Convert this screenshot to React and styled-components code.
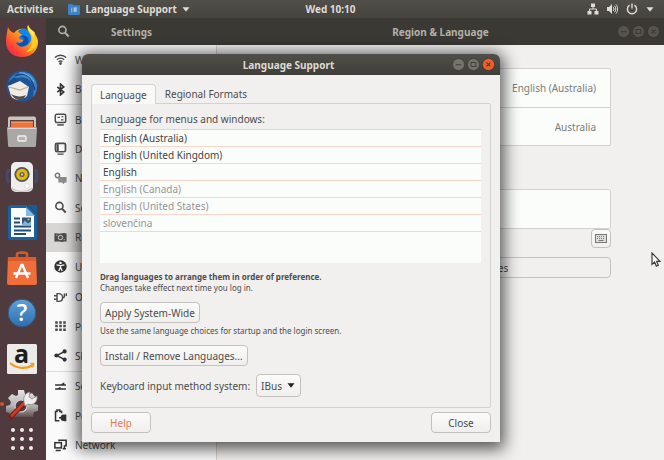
import React, { useState } from "react";
import styled, { createGlobalStyle } from "styled-components";

const GlobalStyle = createGlobalStyle`
  * {
    box-sizing: border-box;
  }
  body {
    margin: 0;
    font-family: "Noto Sans", "Open Sans", sans-serif;
    font-size: 10px;
    line-height: 16px;
    color: #4c4c4c;
  }
  button,
  select {
    font: inherit;
    color: inherit;
  }
`;

const Desktop = styled.div`
  position: relative;
  display: flex;
  flex-direction: column;
  min-height: 100vh;
  overflow: hidden;
  background: #f1f0ef;
`;

const TopBar = styled.header`
  display: grid;
  grid-template-columns: 1fr auto 1fr;
  align-items: center;
  height: 18px;
  padding: 0 10px 0 7px;
  background: linear-gradient(#514f49, #45433e);
  color: #dfdcd6;
  font-weight: 700;
`;

const BarGroup = styled.div`
  display: flex;
  align-items: center;
  justify-content: ${(props) => (props.$end ? "flex-end" : "flex-start")};
  gap: ${(props) => (props.$end ? "8px" : "15px")};
`;

const BarButton = styled.button`
  display: flex;
  align-items: center;
  gap: 5px;
  padding: 0;
  border: none;
  background: none;
`;

const Workspace = styled.div`
  display: flex;
  flex: 1;
`;

const Dock = styled.nav`
  display: flex;
  flex-direction: column;
  width: 46px;
  padding-right: 2px;
  background: #4f3a3e;
`;

const DockItem = styled.button`
  position: relative;
  display: flex;
  flex: 1;
  align-items: center;
  justify-content: center;
  padding: 0;
  border: none;
  background: none;

  svg {
    display: block;
    overflow: visible;
  }
`;

const AppsItem = styled(DockItem)`
  flex: 0 0 33px;
  align-items: flex-start;
  padding-top: 1px;
`;

const RunningDot = styled.span`
  position: absolute;
  left: 0;
  width: 4px;
  height: 4px;
  border-radius: 2px;
  background: #d9532c;
`;

const SettingsWindow = styled.main`
  display: grid;
  grid-template-columns: 171px 1fr;
  grid-template-rows: 27px 1fr;
  flex: 1;
`;

const WindowHeader = styled.div`
  display: grid;
  grid-template-columns: 48px 1fr 48px;
  align-items: center;
  background: #3b3934;
  color: #b5b1a8;
  font-weight: 700;
  text-align: center;
`;

const HeaderIcon = styled.button`
  display: flex;
  padding: 0 0 0 11px;
  border: none;
  background: none;
`;

const Title = styled.h1`
  grid-column: 2;
  margin: 0;
  font-size: 10px;
`;

const Sidebar = styled.ul`
  display: flex;
  flex-direction: column;
  margin: 0;
  padding: 0;
  list-style: none;
  background: #fafafa;
  border-right: 1px solid #d5d3d0;
`;

const SidebarRow = styled.li`
  display: flex;
  flex: 1;
  background: ${(props) => (props.$active ? "#d8d6d4" : "transparent")};
  border-bottom: ${(props) => (props.$last ? "1px solid #dcdad8" : "none")};
`;

const SidebarLink = styled.a`
  display: flex;
  flex: 1;
  align-items: center;
  gap: 8px;
  padding-left: 8px;
  color: #4c4c4c;
  text-decoration: none;
`;

const Panel = styled.section`
  display: flex;
  flex-direction: column;
  padding: 23px 53px;
`;

const Card = styled.div`
  background: #fbfdfb;
  border: 1px solid #d3d2d0;
  border-radius: 2px;
`;

const CardRow = styled.div`
  display: flex;
  align-items: center;
  justify-content: space-between;
  height: 38px;
  padding: 0 14px;
  color: #7b7b7b;

  & + & {
    border-top: 1px solid #d3d2d0;
  }
`;

const SourcesLabel = styled.h2`
  margin: 20px 0 7px;
  font-size: 10px;
`;

const Button = styled.button`
  height: 21px;
  padding: 0 4px;
  border: 1px solid #c4c2bf;
  border-radius: 4px;
  background: linear-gradient(#fbfbfa, #f0efee);
  color: ${(props) => (props.$accent ? "#f0764d" : "#4c4c4c")};
  line-height: 18px;
`;

const KeyboardButton = styled(Button)`
  display: flex;
  align-items: center;
  justify-content: center;
  align-self: flex-end;
  width: 20px;
  height: 19px;
  padding: 0;
  margin-bottom: 9px;
`;

const FlatButton = styled(Button)`
  background: #f1f0ef;
`;

const Dialog = styled.div`
  position: absolute;
  top: 54px;
  left: 82px;
  width: 418px;
  border-radius: 6px 6px 0 0;
  background: #f1f0ef;
  box-shadow: 0 3px 16px 4px rgba(0, 0, 0, 0.65);
`;

const DialogHeader = styled(WindowHeader)`
  height: 21px;
  padding-right: 5px;
  border-radius: 6px 6px 0 0;
  background: linear-gradient(#504e48, #403e39);
  color: #dedad2;
`;

const WindowControls = styled.div`
  display: flex;
  justify-content: flex-end;
  gap: 2px;
`;

const HeaderControls = styled(WindowControls)`
  padding-right: 4px;
`;

const ControlButton = styled.button`
  display: flex;
  padding: 0;
  border: none;
  background: none;
`;

const DialogBody = styled.div`
  padding: 9px;
`;

const Tabs = styled.div`
  display: flex;
  height: 19px;
`;

const Tab = styled.button`
  height: ${(props) => (props.$active ? "20px" : "19px")};
  padding: 0 8px;
  border: 1px solid ${(props) => (props.$active ? "#d3d2d0" : "transparent")};
  border-bottom: none;
  border-radius: 4px 4px 0 0;
  background: ${(props) => (props.$active ? "#f9f9f8" : "none")};
  line-height: 18px;
`;

const TabPage = styled.div`
  display: flex;
  flex-direction: column;
  align-items: flex-start;
  height: 305px;
  padding: 7px 9px 0 8px;
  border: 1px solid #d3d2d0;
  border-radius: 0 2px 2px 2px;
`;

const LanguageList = styled.ol`
  align-self: stretch;
  height: 134px;
  margin: 2px 0 8px;
  padding: 0;
  list-style: none;
  background: #fbfdfb;
  border-top: 1px solid #f8cdbd;
`;

const LanguageRow = styled.li`
  height: 17px;
  padding-left: 3px;
  border-bottom: 1px solid #f9d6c9;
  color: ${(props) => (props.$muted ? "#949494" : "#444")};
`;

const Hint = styled.p`
  margin: 0;
  font-size: 8px;
  line-height: 11px;
  font-weight: ${(props) => (props.$bold ? 700 : 400)};
`;

const Block = styled.div`
  display: flex;
  flex-direction: column;
  align-items: flex-start;
  gap: 2px;
  margin-top: 9px;
`;

const InputMethod = styled.div`
  display: flex;
  align-items: center;
  gap: 6px;
  margin-top: 8px;
`;

const SelectBox = styled.span`
  position: relative;
  display: flex;
  align-items: center;

  svg {
    position: absolute;
    right: 6px;
    pointer-events: none;
  }
`;

const Select = styled.select`
  appearance: none;
  width: 45px;
  height: 23px;
  padding: 0 4px;
  border: 1px solid #c4c2bf;
  border-radius: 4px;
  background: linear-gradient(#fbfbfa, #f0efee);
`;

const Actions = styled.div`
  display: flex;
  justify-content: space-between;
  padding-top: 4px;

  ${Button} {
    width: 60px;
  }
`;

const Cursor = styled.svg`
  position: absolute;
  left: 651px;
  top: 252px;
`;

const Caret = ({ color = "currentColor", size = 8 }) => (
  <svg width={size} height={size / 2 + 1} viewBox="0 0 8 5">
    <path d="M0.5 0.3h7L4 4.7z" fill={color} />
  </svg>
);

const Control = ({ label, kind, fill, stroke }) => (
  <ControlButton aria-label={label}>
    <svg width="13" height="13" viewBox="0 0 12 12" fill="none">
      <circle cx="6" cy="6" r="5.5" fill={fill} stroke="#33312c" strokeWidth="0.5" />
      <g stroke={stroke}>
        {kind === "min" && <path d="M3.5 6.2h5" />}
        {kind === "max" && <path d="M3.8 4.2h4.4v3.6H3.8z" />}
        {kind === "close" && <path d="M4.2 4.2l3.6 3.6M7.8 4.2L4.2 7.8" />}
      </g>
    </svg>
  </ControlButton>
);

const glyphs = {
  search: (
    <g fill="none" stroke="currentColor">
      <circle cx="5" cy="4.6" r="3.3" strokeWidth="1.5" />
      <path d="M7.4 7l3.4 3.6" strokeWidth="1.9" />
    </g>
  ),
  wifi: (
    <g fill="none" stroke="currentColor" strokeWidth="1.3">
      <path d="M0.8 4.2c3-2.9 7.4-2.9 10.4 0M2.7 6.3c2-1.9 4.6-1.9 6.6 0M4.3 8.2c1-1 2.4-1 3.4 0" />
      <circle cx="6" cy="9.8" r="0.6" fill="currentColor" />
    </g>
  ),
  bluetooth: (
    <path d="M3 3.6l6 4.8-3 2.6V1l3 2.6-6 4.8" fill="none" stroke="#333" strokeWidth="1.5" />
  ),
  background: (
    <g fill="none" stroke="currentColor" strokeWidth="1.4">
      <rect x="1.2" y="1.2" width="9.6" height="7.6" rx="1.4" />
      <path d="M3 11h6" />
      <path d="M3.3 4h2.2M6.5 6.4h2.2M7 3.4h1.6" strokeWidth="1.2" />
    </g>
  ),
  dock: (
    <g fill="none" stroke="currentColor" strokeWidth="1.6">
      <rect x="1.4" y="1.2" width="9.2" height="7.8" rx="1.4" />
      <path d="M3.4 2v6.5" strokeWidth="2" />
      <path d="M3.2 11.2h5.6" strokeWidth="1.2" />
    </g>
  ),
  notifications: (
    <g fill="none" stroke="#777" strokeWidth="1.4">
      <circle cx="3.2" cy="3.2" r="2" />
      <path d="M4 4.6h7.6v5H9.9L8.8 11.4 7.6 9.6H4z" fill="#8c8c8c" stroke="none" />
    </g>
  ),
  region: (
    <g>
      <path d="M0.4 2.4c2-1 3.6.6 5.6 0s3.4-1 5.6 0V10c-2.2-1-3.6.5-5.6 0s-3.6-.6-5.6 0z" fill="currentColor" />
      <circle cx="6" cy="6" r="2" fill="none" stroke="#d8d6d4" strokeWidth="0.9" />
      <path d="M2 3.8h1.2M8.8 8h1.2" stroke="#d8d6d4" strokeWidth="0.7" />
    </g>
  ),
  access: (
    <g>
      <circle cx="6" cy="6" r="5.7" fill="#333" />
      <circle cx="6" cy="2.7" r="1.1" fill="#fff" />
      <path d="M2.4 4.6L6 5.2l3.6-.6M6 4.8v2.4M6 6.6l-1.6 3.6M6 6.6l1.6 3.6" stroke="#fff" strokeWidth="1.2" fill="none" />
    </g>
  ),
  online: (
    <g fill="none" stroke="currentColor" strokeWidth="1.3">
      <path d="M2.8 2.4h1.4c5 0 5 7.2 0 7.2H2.8z" />
      <path d="M0 4.4h2.8M0 7.6h2.8M7.8 6h2M9.6 2.4v3.2M11.4 2v2.6" />
    </g>
  ),
  privacy: (
    <g stroke="currentColor" strokeWidth="2.4">
      <path d="M2.3 1.2v2.2M6 1.2v2.2M9.7 1.2v2.2M2.3 4.4v2.4M6 4.4v2.4M9.7 4.4v2.4M2.3 7.8v2.4M6 7.8v2.4M9.7 7.8v2.4" />
    </g>
  ),
  sharing: (
    <g fill="#333">
      <path d="M10 2.2L2.4 6 10 9.8" fill="none" stroke="#333" strokeWidth="1.3" />
      <circle cx="9.8" cy="2.2" r="1.9" />
      <circle cx="2.2" cy="6" r="1.9" />
      <circle cx="9.8" cy="9.8" r="1.9" />
    </g>
  ),
  sound: (
    <g fill="#333">
      <path d="M1 4h5.5L9.5 2v2H11v1.3H1zM1 7.6h2.500l2.500-1.400v1.400h5v1.300H1z" />
    </g>
  ),
  power: (
    <g>
      <path d="M5 10.8H1.4V2.4h1.4V1h2.6v1.4H7V4" fill="none" stroke="#333" strokeWidth="1.4" />
      <path d="M11.4 5H9.6C6.6 5 6.2 6.6 6.2 7.400H4.6v1.400h1.600c0 .8.4 2.400 3.400 2.400h1.800z" fill="#333" />
    </g>
  ),
  network: (
    <g fill="none" stroke="#333" strokeWidth="1.4">
      <path d="M4.6 2V1.2h6.6v5H9.6M9.6 6v2.6M8 9h3" />
      <rect x="0.8" y="3.4" width="6" height="4.8" />
      <path d="M1.6 10.6h4.6" />
    </g>
  ),
};

const Glyph = ({ name, size = 13 }) => (
  <svg width={size} height={size} viewBox="0 0 12 12">
    {glyphs[name]}
  </svg>
);

const dockIcons = {
  Firefox: (
    <svg width="32" height="32" viewBox="0 0 32 32">
      <defs>
        <linearGradient id="fox" x1="1" y1="0" x2="0" y2="1">
          <stop offset="0" stopColor="#fff03c" />
          <stop offset="0.4" stopColor="#ffa21a" />
          <stop offset="0.7" stopColor="#ff4a2f" />
          <stop offset="1" stopColor="#e6195f" />
        </linearGradient>
      </defs>
      <path d="M2 2c1 3 3 5 6 6 5-6 11-5 14-1l2 3 8 7c0 9-7 15-16 15S0 26 0 17C0 11 1 8 2 2z" fill="url(#fox)" />
      <path d="M12 6c4-4 9-3 12 1 3 5 1 12-4 14-6 2-9-1-10-4 3 1 7 1 8-2-4 0-5-1-5-3l3-2c-1-2-3-1-4-4z" fill="#1583e8" />
      <path d="M14 11c3-1 6-1 8 2 2 4-1 7-4 8-3 1-6 0-8-3 3 1 6 0 7-2 2-2 0-4-3-5z" fill="#0a50b8" />
      <path d="M22 0c-2 6 3 8 4 14s-2 10-6 13c7-1 11-5 12-11C31 8 24 6 22 0z" fill="#ffc928" />
      <path d="M22 0c-2 5 4 7 5 13l2-5c-2-3-6-4-7-8z" fill="#ffee45" />
    </svg>
  ),
  Thunderbird: (
    <svg width="32" height="32" viewBox="0 0 32 32">
      <circle cx="16" cy="16" r="15.5" fill="#1f5596" />
      <path d="M2 13C6 3 16 0 24 4c8 5 9 17 3 23 2-8 0-14-5-18C15 5 8 8 2 13z" fill="#3c86c8" />
      <path d="M9 6c5-3 12-3 16 3l4 11" fill="none" stroke="#1b4a88" strokeWidth="1.8" />
      <path d="M13 3c6-1 12 3 15 9" fill="none" stroke="#6aabdd" strokeWidth="1.2" />
      <path d="M2 16l12-5 9 6-2 9c-5 5-13 5-16 0z" fill="#f0ece4" />
      <path d="M3 17l11 3 8-3" fill="none" stroke="#b7afa3" strokeWidth="1.2" />
      <path d="M5 24c5 3 11 3 15 1l-3 5c-5 1-9-1-12-6z" fill="#56504b" />
      <path d="M1 13l7-6 5 3-9 5z" fill="#1d4c88" />
    </svg>
  ),
  Files: (
    <svg width="30" height="32" viewBox="0 0 30 32">
      <rect x="1" y="0.5" width="28" height="30" rx="2" fill="#c7c5c2" />
      <rect x="3" y="4" width="24" height="8" fill="#5c4034" />
      <rect x="4" y="6" width="22" height="8" fill="#f0713c" />
      <path d="M4 6h22" stroke="#f7b491" />
      <path d="M0 13c0-1 0-2 1-2h28c1 0 1 1 1 2l-1 16c0 2-1 2-2 2H3c-1 0-2 0-2-2z" fill="#aaa8a6" />
      <path d="M1 12.5h28" stroke="#d9d7d4" />
      <rect x="11" y="20" width="8" height="5" rx="1" fill="#b6b4b1" stroke="#f1f1f1" strokeWidth="1.4" />
    </svg>
  ),
  Rhythmbox: (
    <svg width="32" height="32" viewBox="0 0 32 32">
      <path d="M3 8c-3 5-3 9 0 14M29 8c3 5 3 9 0 14" fill="none" stroke="#464a70" strokeWidth="3" />
      <rect x="5" y="1" width="22" height="30" rx="5" fill="#eeeeec" />
      <path d="M6 26c3 5 17 5 20 0v2c-2 4-18 4-20 0z" fill="#c6c6c6" />
      <circle cx="16" cy="13.5" r="7.6" fill="#565654" />
      <circle cx="16" cy="13.5" r="5.8" fill="#e2b90f" />
      <circle cx="16" cy="13.5" r="2.6" fill="#66665f" />
      <circle cx="16" cy="13.5" r="1" fill="#f6e7a0" />
      <circle cx="21" cy="25" r="2.4" fill="#fff" stroke="#ccc" strokeWidth="0.6" />
    </svg>
  ),
  Writer: (
    <svg width="29" height="35" viewBox="0 0 29 35">
      <path d="M2 0h17l10 10v23c0 1-1 2-2 2H2c-1 0-2-1-2-2V2c0-1 1-2 2-2z" fill="#1762a3" />
      <path d="M3 3h15l8 8v21H3z" fill="#fbfbfb" />
      <path d="M20 0h9v9z" fill="#1a5c98" />
      <path d="M18 2v9h9z" fill="#83b9e2" />
      <g stroke="#1b4e80" strokeWidth="1.8">
        <path d="M6 13.5h6M6 17.5h6M6 21.5h17M6 25.5h17M6 29h12" />
      </g>
      <rect x="14" y="12.5" width="9" height="7" fill="#2c5783" />
      <path d="M14 19.5l3-4 3 3 3-2v3z" fill="#8db4d4" />
      <circle cx="20.5" cy="14.6" r="1" fill="#f2c730" />
    </svg>
  ),
  Software: (
    <svg width="30" height="34" viewBox="0 0 30 34">
      <path d="M10 9V3c0-2 10-2 10 0v6" fill="none" stroke="#d35a2c" strokeWidth="2.6" />
      <path d="M1 6h28l1 26c0 1-1 2-2 2H2c-1 0-2-1-2-2z" fill="#ef6e39" />
      <path d="M1 6h28l.2 4H.8z" fill="#d95c2c" />
      <path d="M9 27l5.5-13h1L21 27M6.5 22.5h17" fill="none" stroke="#fff" strokeWidth="2.4" />
    </svg>
  ),
  Help: (
    <svg width="30" height="30" viewBox="0 0 30 30">
      <defs>
        <linearGradient id="help" x1="0" y1="0" x2="0" y2="1">
          <stop offset="0" stopColor="#5fa0d6" />
          <stop offset="1" stopColor="#2f6faf" />
        </linearGradient>
      </defs>
      <circle cx="15" cy="15" r="13.8" fill="url(#help)" stroke="#2c5c8e" />
      <text x="15" y="23" textAnchor="middle" fontFamily="Open Sans, sans-serif" fontSize="23" fontWeight="600" fill="#fff">?</text>
    </svg>
  ),
  Amazon: (
    <svg width="30" height="30" viewBox="0 0 30 30">
      <rect width="30" height="30" rx="1.5" fill="#ebebea" />
      <text x="14.5" y="18.5" textAnchor="middle" fontFamily="Open Sans, sans-serif" fontSize="25" fontWeight="700" fill="#1d1d1d">a</text>
      <path d="M3 19c7 6 16 6 22 2.5" fill="none" stroke="#f79a1c" strokeWidth="2.2" />
      <path d="M22.5 19.5c2-1 4-1 5 0 0 2-1 4-2.4 5 .6-2 .8-4-2.6-5z" fill="#f79a1c" />
    </svg>
  ),
  Settings: (
    <svg width="32" height="28" viewBox="0 0 32 28">
      <defs>
        <linearGradient id="gear" x1="0" y1="0" x2="0" y2="1">
          <stop offset="0" stopColor="#e6e5e3" />
          <stop offset="0.6" stopColor="#b3b1af" />
          <stop offset="1" stopColor="#5d4e4f" />
        </linearGradient>
      </defs>
      <path
        d="M12 0h6l1 4 3 1 4-2 4 5-3 3 1 3 4 1v6l-4 1-1 5H4l-1-4-3-1v-6l4-1 1-3-3-4 4-4 4 2 2-1z"
        fill="url(#gear)"
      />
      <circle cx="15" cy="16" r="6" fill="#4f3a3e" stroke="#d2d0ce" strokeWidth="1.2" />
      <path d="M5 26.500L19 12.500" stroke="#7d1d18" strokeWidth="5" strokeLinecap="round" />
      <path d="M6 25.500L18 13" stroke="#c93c2c" strokeWidth="2.600" strokeLinecap="round" />
      <path d="M18 12c-1-5 1-9 6-10l-1 5 3 2 5-3c1 6-4 10-9 8l-3 2z" fill="#efeeec" stroke="#8b8987" strokeWidth="0.8" />
    </svg>
  ),
};

const sidebarItems = [
  { icon: "wifi", label: "Wi-Fi" },
  { icon: "bluetooth", label: "Bluetooth", last: true },
  { icon: "background", label: "Background" },
  { icon: "dock", label: "Dock" },
  { icon: "notifications", label: "Notifications" },
  { icon: "search", label: "Search" },
  { icon: "region", label: "Region & Language", active: true },
  { icon: "access", label: "Universal Access", last: true },
  { icon: "online", label: "Online Accounts" },
  { icon: "privacy", label: "Privacy" },
  { icon: "sharing", label: "Sharing", last: true },
  { icon: "sound", label: "Sound" },
  { icon: "power", label: "Power" },
  { icon: "network", label: "Network" },
];

const languages = [
  { name: "English (Australia)" },
  { name: "English (United Kingdom)" },
  { name: "English" },
  { name: "English (Canada)", muted: true },
  { name: "English (United States)", muted: true },
  { name: "slovenčina", muted: true },
];

const SystemBar = () => (
  <TopBar>
    <BarGroup>
      <BarButton>Activities</BarButton>
      <BarButton>
        <svg width="12" height="11" viewBox="0 0 11 10">
          <path d="M0 1.5C0 .5.5 0 1 0h3l1 1h5c.6 0 1 .4 1 1v7c0 .6-.4 1-1 1H1c-.6 0-1-.4-1-1z" fill="#3c82c4" />
          <path d="M3 3.5l5-.5v4l-5 .5z" fill="#9cc6ea" />
          <path d="M4.5 3v4.5" stroke="#2f6fae" />
        </svg>
        Language Support
        <Caret />
      </BarButton>
    </BarGroup>
    <BarButton>Wed 10:10</BarButton>
    <BarGroup $end>
      <svg width="12" height="12" viewBox="0 0 12 12" fill="currentColor">
        <path d="M4 0.5h4V4H4zM0.5 8h4v3.5h-4zM7.5 8h4v3.5h-4z" />
        <path d="M6 4v2M2.5 8V6h7v2" fill="none" stroke="currentColor" />
      </svg>
      <svg width="11" height="12" viewBox="0 0 11 12" fill="none" stroke="currentColor">
        <path d="M0 4h2l3-3v10L2 8H0z" fill="currentColor" stroke="none" />
        <path d="M6.2 4c1 1 1 3 0 4M7.6 2.7c1.6 2 1.6 4.6 0 6.6M9 1.4c2.2 3 2.2 6.2 0 9.2" />
      </svg>
      <BarButton aria-label="System menu">
        <svg width="12" height="12" viewBox="0 0 12 12" fill="none" stroke="currentColor" strokeWidth="1.4">
          <path d="M3.6 2.2a4.6 4.6 0 1 0 4.8 0M6 0.5v5" />
        </svg>
      </BarButton>
      <Caret />
    </BarGroup>
  </TopBar>
);

const LanguageDialog = () => {
  const [tab, setTab] = useState("Language");
  const [method, setMethod] = useState("IBus");

  return (
    <Dialog role="dialog" aria-labelledby="dialog-title">
      <DialogHeader>
        <Title id="dialog-title">Language Support</Title>
        <WindowControls>
          <Control label="Minimize" kind="min" fill="#76736c" stroke="#45433e" />
          <Control label="Maximize" kind="max" fill="#76736c" stroke="#45433e" />
          <Control label="Close window" kind="close" fill="#ee5f2c" stroke="#6b2a12" />
        </WindowControls>
      </DialogHeader>
      <DialogBody>
        <Tabs role="tablist">
          {["Language", "Regional Formats"].map((name) => (
            <Tab
              key={name}
              role="tab"
              aria-selected={tab === name}
              $active={tab === name}
              onClick={() => setTab(name)}
            >
              {name}
            </Tab>
          ))}
        </Tabs>
        <TabPage role="tabpanel">
          <span>Language for menus and windows:</span>
          <LanguageList>
            {languages.map((item) => (
              <LanguageRow key={item.name} $muted={item.muted}>
                {item.name}
              </LanguageRow>
            ))}
          </LanguageList>
          <Hint $bold>Drag languages to arrange them in order of preference.</Hint>
          <Hint>Changes take effect next time you log in.</Hint>
          <Block>
            <Button>Apply System-Wide</Button>
            <Hint>Use the same language choices for startup and the login screen.</Hint>
          </Block>
          <Block>
            <Button>Install / Remove Languages...</Button>
          </Block>
          <InputMethod>
            <label htmlFor="method">Keyboard input method system:</label>
            <SelectBox>
              <Select id="method" value={method} onChange={(e) => setMethod(e.target.value)}>
                <option>IBus</option>
                <option>XIM</option>
                <option>none</option>
              </Select>
              <Caret color="#222" />
            </SelectBox>
          </InputMethod>
        </TabPage>
        <Actions>
          <Button $accent>Help</Button>
          <Button>Close</Button>
        </Actions>
      </DialogBody>
    </Dialog>
  );
};

const App = () => (
  <>
    <GlobalStyle />
    <Desktop>
      <SystemBar />
      <Workspace>
        <Dock>
          {Object.keys(dockIcons).map((name) => (
            <DockItem key={name} aria-label={name}>
              {name === "Settings" && <RunningDot />}
              {dockIcons[name]}
            </DockItem>
          ))}
          <AppsItem aria-label="Show applications">
            <svg width="22" height="22" viewBox="0 0 22 22" fill="#efeeec">
              {[2, 11, 20].map((y) =>
                [2, 11, 20].map((x) => <circle key={`${x}-${y}`} cx={x} cy={y} r="2" />)
              )}
            </svg>
          </AppsItem>
        </Dock>
        <SettingsWindow>
          <WindowHeader>
            <HeaderIcon aria-label="Search settings">
              <Glyph name="search" />
            </HeaderIcon>
            <Title>Settings</Title>
          </WindowHeader>
          <WindowHeader>
            <Title>Region &amp; Language</Title>
            <HeaderControls>
              <Control label="Minimize" kind="min" fill="#57544e" stroke="#3b3934" />
              <Control label="Maximize" kind="max" fill="#57544e" stroke="#3b3934" />
              <Control label="Close window" kind="close" fill="#57544e" stroke="#3b3934" />
            </HeaderControls>
          </WindowHeader>
          <Sidebar>
            {sidebarItems.map((item) => (
              <SidebarRow key={item.label} $active={item.active} $last={item.last}>
                <SidebarLink href="#">
                  <Glyph name={item.icon} />
                  {item.label}
                </SidebarLink>
              </SidebarRow>
            ))}
          </Sidebar>
          <Panel>
            <Card>
              <CardRow>
                <span>Language</span>
                <span>English (Australia)</span>
              </CardRow>
              <CardRow>
                <span>Formats</span>
                <span>Australia</span>
              </CardRow>
            </Card>
            <SourcesLabel>Input Sources</SourcesLabel>
            <Card>
              <CardRow>
                <span>English (Australian)</span>
              </CardRow>
            </Card>
            <KeyboardButton aria-label="Show keyboard layout">
              <svg width="12" height="9" viewBox="0 0 12 9">
                <rect x="0.5" y="0.5" width="11" height="8" fill="#ddd" stroke="#777" />
                <path d="M2 2.5h8M2 4.5h8" stroke="#777" strokeDasharray="1 1" />
                <path d="M3.5 6.5h5" stroke="#777" />
              </svg>
            </KeyboardButton>
            <FlatButton>Manage Installed Languages</FlatButton>
          </Panel>
        </SettingsWindow>
      </Workspace>
      <LanguageDialog />
      <Cursor width="11" height="16" viewBox="0 0 11 16">
        <path d="M1 1v11.5l2.6-2.4 1.7 4 2-.9-1.7-3.9H9z" fill="#fff" stroke="#3c3c3c" strokeWidth="1.2" />
      </Cursor>
    </Desktop>
  </>
);

export default App;
